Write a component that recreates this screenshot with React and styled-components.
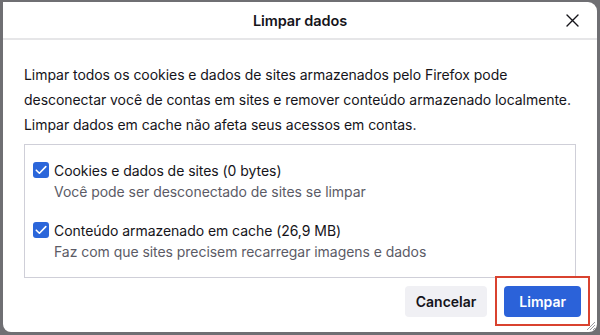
import React from "react";
import styled, { createGlobalStyle } from "styled-components";

const Global = createGlobalStyle`
  html, body { margin: 0; padding: 0; }
  body {
    width: 600px;
    height: 335px;
    overflow: hidden;
    background: #6f6f73;
    font-family: Inter, "Noto Sans", "Liberation Sans", sans-serif;
    -webkit-font-smoothing: antialiased;
  }
`;

const Screen = styled.div`
  width: 600px;
  height: 335px;
  box-sizing: border-box;
  padding: 2px 3px 3px 3px;
  display: flex;
`;

const Dialog = styled.div`
  position: relative;
  flex: 1;
  background: #ffffff;
  border-radius: 0 9px 8px 8px;
  display: flex;
  flex-direction: column;
  color: #15141a;
  overflow: hidden;
`;

const Header = styled.div`
  position: relative;
  flex-shrink: 0;
  height: 36px;
  border-bottom: 2px solid #e6e6e8;
  display: flex;
  align-items: center;
  justify-content: center;
`;

const Title = styled.h1`
  margin: 0;
  font-size: 14.5px;
  font-weight: 600;
  letter-spacing: -0.1px;
`;

const CloseButton = styled.button`
  position: absolute;
  right: 15px;
  top: 8px;
  width: 20px;
  height: 20px;
  padding: 0;
  border: none;
  background: transparent;
  display: flex;
  align-items: center;
  justify-content: center;
`;

const Body = styled.div`
  flex-shrink: 0;
  padding: 22px 21px 0 21px;
  display: flex;
  flex-direction: column;
`;

const Intro = styled.p`
  margin: 0;
  font-size: 14px;
  line-height: 25px;
  letter-spacing: -0.05px;
`;

const OptionsBox = styled.div`
  margin-top: 7px;
  border: 1px solid #cfcfd8;
  padding: 14px 8px 14px 8px;
  display: flex;
  flex-direction: column;
  gap: 16px;
`;

const Option = styled.div`
  display: flex;
  flex-direction: column;
`;

const OptionRow = styled.label`
  display: flex;
  align-items: center;
  gap: 5px;
  height: 22px;
  font-size: 14px;
  letter-spacing: -0.05px;
`;

const CheckBox = styled.span`
  width: 16px;
  height: 16px;
  border-radius: 3px;
  background: #2b66da;
  display: flex;
  align-items: center;
  justify-content: center;
  flex-shrink: 0;
`;

const Hint = styled.div`
  padding-left: 21px;
  height: 22px;
  line-height: 22px;
  font-size: 14px;
  color: #5b5b66;
  letter-spacing: -0.05px;
`;

const Footer = styled.div`
  flex-shrink: 0;
  margin-top: 8px;
  padding-right: 16px;
  display: flex;
  justify-content: flex-end;
  gap: 17px;
`;

const Button = styled.button`
  position: relative;
  height: 31px;
  padding: 0 ${(p) => (p.$primary ? 15 : 11)}px;
  border: none;
  border-radius: 4px;
  font-family: inherit;
  font-size: 14px;
  font-weight: 600;
  letter-spacing: 0;
  background: ${(p) => (p.$primary ? "#2b62d9" : "#f0f0f4")};
  color: ${(p) => (p.$primary ? "#ffffff" : "#15141a")};

  ${(p) =>
    p.$highlight &&
    `
    &::after {
      content: "";
      position: absolute;
      left: -9px;
      right: -9px;
      top: -10px;
      bottom: -9px;
      border: 2px solid #d9422f;
      pointer-events: none;
    }
  `}
`;

const Grip = styled.svg`
  position: absolute;
  right: 1px;
  bottom: 1px;
`;

function Check() {
  return (
    <svg width="12" height="10" viewBox="0 0 12 10">
      <path d="M1.3 5.2 L4.4 8.2 L10.8 1.6" fill="none" stroke="#fff" strokeWidth="1.6" strokeLinecap="round" strokeLinejoin="round" />
    </svg>
  );
}

export default function App() {
  return (
    <>
      <Global />
      <Screen>
        <Dialog>
          <Header>
            <Title>Limpar dados</Title>
            <CloseButton aria-label="Fechar">
              <svg width="13" height="13" viewBox="0 0 13 13">
                <path d="M1 1 L12 12 M12 1 L1 12" stroke="#15141a" strokeWidth="1.4" strokeLinecap="round" />
              </svg>
            </CloseButton>
          </Header>
          <Body>
            <Intro>
              Limpar todos os cookies e dados de sites armazenados pelo Firefox pode
              <br />
              desconectar você de contas em sites e remover conteúdo armazenado localmente.
              <br />
              Limpar dados em cache não afeta seus acessos em contas.
            </Intro>
            <OptionsBox>
              <Option>
                <OptionRow>
                  <CheckBox>
                    <Check />
                  </CheckBox>
                  Cookies e dados de sites (0 bytes)
                </OptionRow>
                <Hint>Você pode ser desconectado de sites se limpar</Hint>
              </Option>
              <Option>
                <OptionRow>
                  <CheckBox>
                    <Check />
                  </CheckBox>
                  Conteúdo armazenado em cache (26,9 MB)
                </OptionRow>
                <Hint>Faz com que sites precisem recarregar imagens e dados</Hint>
              </Option>
            </OptionsBox>
          </Body>
          <Footer>
            <Button>Cancelar</Button>
            <Button $primary $highlight>
              Limpar
            </Button>
          </Footer>
          <Grip width="10" height="10" viewBox="0 0 10 10">
            <path d="M9 1 L1 9 M9 4 L4 9 M9 7 L7 9" stroke="#9a9aa0" strokeWidth="1" />
          </Grip>
        </Dialog>
      </Screen>
    </>
  );
}
